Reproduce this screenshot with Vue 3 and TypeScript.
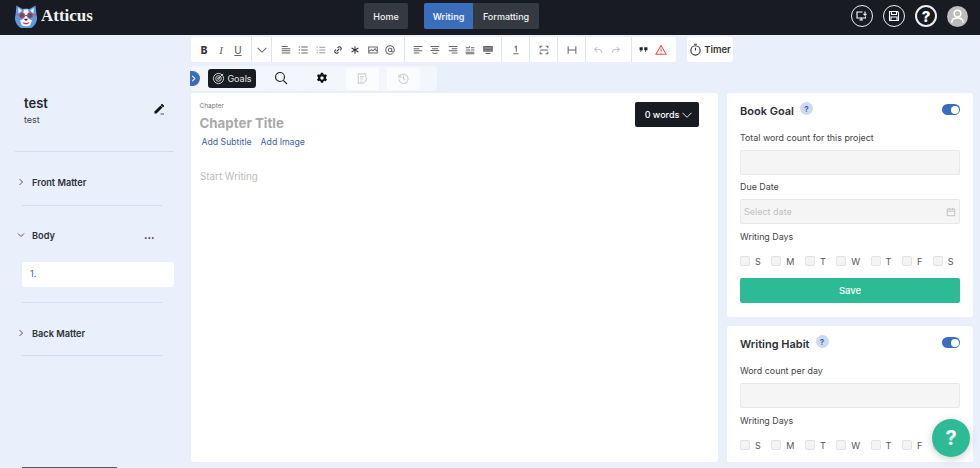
<script setup lang="ts">
interface Tool { key: string; d?: string; text?: string; cls?: string }
const lines = (rows: [number, number][]): string =>
  rows.map(([y, w]) => `M2 ${y}h${w}`).join('');
const centerLines = (rows: [number, number][]): string =>
  rows.map(([y, w]) => `M${7 - w / 2} ${y}h${w}`).join('');
const rightLines = (rows: [number, number][]): string =>
  rows.map(([y, w]) => `M${12 - w} ${y}h${w}`).join('');

const groups: { width: number; pad: number; btn: number; tools: Tool[] }[] = [
  { width: 61, pad: 4.5, btn: 17, tools: [
    { key: 'b', text: 'B', cls: 'bold' }, { key: 'i', text: 'I', cls: 'ital' }, { key: 'u', text: 'U', cls: 'under' },
  ] },
  { width: 20, pad: 1, btn: 18, tools: [{ key: 'chev', d: 'M2 4.500l5 5 5-5' }] },
  { width: 133, pad: 5.5, btn: 17.3, tools: [
    { key: 'para', d: lines([[3, 7], [5.5, 10], [8, 10], [10.5, 10]]) },
    { key: 'ul', d: 'M2 3.500h1.500M5 3.500h7.500M2 7h1.500M5 7h7.500M2 10.500h1.500M5 10.500h7.500' },
    { key: 'ol', d: 'M2.500 3v1.500M2.500 6.300v1.500M2.500 9.500v1.500M5 3.800h7M5 7h7M5 10.200h7', cls: 'soft' },
    { key: 'link', d: 'M5.500 8.500l3-3M6.500 4.500l1-1a2.200 2.200 0 0 1 3 3l-1 1M7.500 9.500l-1 1a2.200 2.200 0 0 1-3-3l1-1', cls: 'dark' },
    { key: 'star', d: 'M7 2.500v9M3 4.700l8 4.600M11 4.700l-8 4.600', cls: 'dark' },
    { key: 'img', d: 'M2 3.500h10v7H2zM2 9l3-2.500 2 1.500 2-2 3 2.500M9 5.200h1' },
    { key: 'at', d: 'M9 7a2 2 0 1 1-4 0 2 2 0 0 1 4 0zM9 5v3a1.500 1.500 0 0 0 3 0V7a5 5 0 1 0-2 4' },
  ] },
  { width: 97, pad: 4.3, btn: 17.4, tools: [
    { key: 'al', d: lines([[3, 10], [5.5, 6.5], [8, 10], [10.5, 6.5]]) },
    { key: 'ac', d: 'M2 3h10M3.500 5.500h7M2 7.500h10M4 10q3 2 6 0' },
    { key: 'ar', d: rightLines([[3, 10], [5.5, 6.5], [8, 10], [10.5, 6.5]]) },
    { key: 'aj', d: 'M2 11.500h10M2 9.500h10M2 7h5M8 7h4M2 4.500h4M8 4.500h4M6.500 2.500v2' },
    { key: 'bk', d: 'M2 2.800h10v5.600H2zM2 3.500h10M2 5h10M2 6.500h10M2 8h10M4 11h6' },
  ] },
  { width: 28, pad: 4.5, btn: 19, tools: [{ key: 'one', d: 'M5.500 4l1.800-1.400v6.400M4 11.500h6' }] },
  { width: 28, pad: 4.5, btn: 19, tools: [{ key: 'fit', d: 'M2.500 5V2.500H5M9 2.500h2.500V5M2.500 9v2.500H5M9 11.500h2.500V9M2.500 7h9' }] },
  { width: 28, pad: 4.5, btn: 19, tools: [{ key: 'wide', d: 'M2.500 2.500v9M11.500 2.500v9M2.500 7h9' }] },
  { width: 46, pad: 3, btn: 18, tools: [
    { key: 'undo', d: 'M6 3.500L3 6.500l3 3M3 6.500h5a3.500 3.500 0 0 1 3.500 4', cls: 'faint' },
    { key: 'redo', d: 'M8 3.500l3 3-3 3M11 6.500H6a3.500 3.500 0 0 0-3.500 4', cls: 'faint' },
  ] },
];
const days: string[] = ['S', 'M', 'T', 'W', 'T', 'F', 'S'];
</script>

<template>
  <div class="app">
    <header class="top">
      <div class="brand">
        <svg class="logo" viewBox="0 0 24 24" width="24" height="24">
          <path d="M2.500 1.500L8.500 5q3.500-1 7 0l6-3.500 1 9.500a11 11 0 1 1-21 0z" fill="#5f9ae0" />
          <path d="M4.200 3.800L7.800 6.500 4.500 9.500zM19.800 3.800L16.200 6.500l3.300 3z" fill="#e9eef6" />
          <path d="M10 5.500h4l2 9h-8z" fill="#f6f6f6" />
          <path d="M6 16.500q6-4 12 0l-2 5q-4 1.500-8 0z" fill="#f6f6f6" />
          <circle cx="8" cy="11.500" r="2.700" fill="#3c5c8e" stroke="#e2453e" stroke-width="1" />
          <circle cx="16" cy="11.500" r="2.700" fill="#3c5c8e" stroke="#e2453e" stroke-width="1" />
          <path d="M2.500 10.500l3 .5M10.500 11.500h3M18.500 11l3-.5" stroke="#e2453e" stroke-width="1" />
          <path d="M10 15h4l-2 2z" fill="#1d2026" />
          <path d="M8.500 18q3.500 2 7 0l-1 1.800q-2.500 1-5 0z" fill="#c9414d" />
        </svg>
        <span class="word">Atticus</span>
      </div>
      <nav class="nav">
        <button class="nav-btn home">Home</button>
        <div class="seg">
          <button class="nav-btn active">Writing</button>
          <button class="nav-btn fmt">Formatting</button>
        </div>
      </nav>
      <div class="actions">
        <span class="ring">
          <svg viewBox="0 0 14 14" width="14" height="14" fill="none" stroke="#fff" stroke-width="1.100">
            <path d="M7.500 3H2v6h8.500V7.500M4.500 11h3.500M6.200 9v2" /><path d="M10 2.500v3.500M8.500 4.800L10 6.300l1.500-1.500" />
          </svg>
        </span>
        <span class="ring">
          <svg viewBox="0 0 14 14" width="14" height="14" fill="none" stroke="#fff" stroke-width="1.100">
            <path d="M2.500 2.500h8l1 1v8h-9zM4.500 2.500v3h5v-3M4 11.500V8h6v3.500" />
          </svg>
        </span>
        <span class="ring strong">?</span>
        <span class="avatar">
          <svg viewBox="0 0 22 22" width="22" height="22" fill="none" stroke="#fff" stroke-width="1.500">
            <circle cx="11" cy="8.500" r="3.500" /><path d="M5 18q0-5 6-5t6 5" />
          </svg>
        </span>
      </div>
    </header>

    <div class="body">
      <aside class="side">
        <div class="book">
          <div>
            <div class="book-title">test</div>
            <div class="book-sub">test</div>
          </div>
          <svg viewBox="0 0 12 12" width="12" height="12">
            <path d="M1.500 8.500L7.500 2.500l2 2-6 6H1.500z" fill="#111" /><path d="M8 2l1-1 2 2-1 1zM7.500 11h3.500" fill="#111" stroke="#111" stroke-width=".7" />
          </svg>
        </div>
        <div class="rule wide" />
        <div class="sec front">
          <svg class="car" viewBox="0 0 8 8" width="8" height="8"><path d="M2.500 1l3 3-3 3" /></svg>
          <span>Front Matter</span>
        </div>
        <div class="rule" />
        <div class="sec body-sec">
          <svg class="car" viewBox="0 0 8 8" width="8" height="8"><path d="M1 2.500l3 3 3-3" /></svg>
          <span>Body</span>
          <b class="dots">...</b>
        </div>
        <div class="chapter">1.</div>
        <div class="rule" />
        <div class="sec back">
          <svg class="car" viewBox="0 0 8 8" width="8" height="8"><path d="M2.500 1l3 3-3 3" /></svg>
          <span>Back Matter</span>
        </div>
        <div class="rule" />
        <div class="foot" />
      </aside>

      <main class="center">
        <div class="toolrow">
          <div class="toolbar">
            <div
              v-for="g in groups"
              :key="g.width + g.tools[0].key"
              class="group"
              :style="{ width: g.width + 'px', paddingLeft: g.pad + 'px' }"
            >
              <span
                v-for="t in g.tools"
                :key="t.key"
                class="tool"
                :class="t.cls"
                :style="{ width: g.btn + 'px' }"
              >
                <template v-if="t.text">{{ t.text }}</template>
                <svg v-else viewBox="0 0 14 14" width="12" height="12" fill="none" stroke="currentColor" stroke-width="1.200">
                  <path :d="t.d" />
                </svg>
              </span>
            </div>
            <div class="group last">
              <span class="tool"><svg viewBox="0 0 14 14" width="11" height="11"><path d="M2 4h4v4H4.500L4 10H2.800l.7-2H2zM8 4h4v4h-1.500L10 10H8.800l.7-2H8z" fill="#222" /></svg></span>
              <span class="tool"><svg viewBox="0 0 14 14" width="12" height="12" fill="none" stroke="#e8504a" stroke-width="1.200"><path d="M7 1.800L13 12H1zM7 5.500v3.500M7 10v1" /></svg></span>
            </div>
          </div>
          <div class="timer">
            <svg viewBox="0 0 14 14" width="13" height="13" fill="none" stroke="#333" stroke-width="1.200">
              <circle cx="7" cy="8" r="5" /><path d="M5.500 1.300h3M7 5v3" />
            </svg>
            <span>Timer</span>
          </div>
        </div>

        <div class="subrow">
          <span class="collapse">
            <svg viewBox="0 0 8 8" width="7" height="7" fill="none" stroke="#fff" stroke-width="1.200"><path d="M2.500 1l3 3-3 3" /></svg>
          </span>
          <button class="goals">
            <svg viewBox="0 0 14 14" width="13" height="13" fill="none" stroke="#ddd" stroke-width="1">
              <circle cx="7" cy="7" r="5.500" /><circle cx="7" cy="7" r="3" /><circle cx="7" cy="7" r="1" /><path d="M7 7l5-5" />
            </svg>
            Goals
          </button>
          <span class="sub plain search">
            <svg viewBox="0 0 14 14" width="14" height="14" fill="none" stroke="#222" stroke-width="1.100"><circle cx="6" cy="6" r="4.500" /><path d="M9.300 9.300L13 13" /></svg>
          </span>
          <span class="sub plain">
            <svg viewBox="0 0 14 14" width="12" height="12">
              <path fill="#111" fill-rule="evenodd" d="M5.700 1h2.600l.4 1.700 1.200.6 1.600-.8 1.400 2.200-1.300 1.200v1.600l1.300 1.200-1.400 2.200-1.600-.8-1.200.7-.4 1.700H5.700l-.4-1.700-1.200-.7-1.600.8L1.100 8.700l1.300-1.200V5.900L1.100 4.700l1.400-2.200 1.600.8 1.200-.6zM7 5a2 2 0 1 0 0 4 2 2 0 0 0 0-4z" />
            </svg>
          </span>
          <span class="sub">
            <svg viewBox="0 0 14 14" width="13" height="13" fill="none" stroke="#d0d0d0" stroke-width="1.200"><path d="M10.500 6V2h-8v10h6M4.500 5h4M4.500 7.500h3M4.500 10h2M12 6.500l-3 5" /></svg>
          </span>
          <span class="sub">
            <svg viewBox="0 0 14 14" width="13" height="13" fill="none" stroke="#d0d0d0" stroke-width="1.200"><path d="M2.500 5a5 5 0 1 1-.5 3M2 2.500V5.500h3M7 4v3.500l2 1" /></svg>
          </span>
        </div>

        <section class="editor">
          <div class="ed-head">
            <div>
              <div class="ch-label">Chapter</div>
              <div class="ch-title">Chapter Title</div>
              <div class="ch-links"><a>Add Subtitle</a><a>Add Image</a></div>
            </div>
            <button class="words">
              0 words
              <svg viewBox="0 0 10 10" width="10" height="10" fill="none" stroke="#fff" stroke-width=".9"><path d="M.5 2.800L5 7.300l4.500-4.500" /></svg>
            </button>
          </div>
          <div class="start">Start Writing</div>
        </section>
      </main>

      <aside class="right">
        <section class="card goal">
          <div class="card-head">
            <h3>Book Goal</h3><span class="hint">?</span>
            <span class="toggle" />
          </div>
          <label class="lab first">Total word count for this project</label>
          <div class="field" />
          <label class="lab">Due Date</label>
          <div class="field date">
            <span>Select date</span>
            <svg viewBox="0 0 12 12" width="10" height="10" fill="none" stroke="#bbb" stroke-width="1"><path d="M1.500 2.500h9v8h-9zM1.500 5h9M4 1v2.500M8 1v2.500" /></svg>
          </div>
          <label class="lab wd">Writing Days</label>
          <div class="days">
            <span v-for="(d, i) in days" :key="i" class="day"><i />{{ d }}</span>
          </div>
          <button class="save">Save</button>
        </section>
        <section class="card habit">
          <div class="card-head">
            <h3>Writing Habit</h3><span class="hint">?</span>
            <span class="toggle" />
          </div>
          <label class="lab first">Word count per day</label>
          <div class="field" />
          <label class="lab wd">Writing Days</label>
          <div class="days">
            <span v-for="(d, i) in days" :key="i" class="day"><i />{{ d }}</span>
          </div>
        </section>
      </aside>
    </div>
    <button class="fab">?</button>
  </div>
</template>

<style>
html, body { margin: 0; background: #e9f0fb; overflow: hidden; }
</style>

<style scoped>
* { box-sizing: border-box; }
.app { position: relative; width: 980px; height: 468px; overflow: hidden; background: #e9f0fb; font-family: Inter, "Liberation Sans", sans-serif; color: #333; }
button { font-family: inherit; border: 0; padding: 0; }
.top { height: 35px; background: #181c22; display: flex; align-items: flex-start; position: relative; }
.brand { width: 364px; height: 32px; display: flex; align-items: center; padding-left: 14px; gap: 3px; }
.logo { flex: none; }
.word { font-family: "Liberation Serif", serif; font-weight: 700; font-size: 17px; color: #f3f3f3; }
.nav { display: flex; gap: 16px; padding-top: 3px; }
.seg { display: flex; }
.nav-btn { height: 26px; color: #f2f2f2; font-size: 9px; font-weight: 500; background: #343a40; }
.home { width: 44px; border-radius: 2px; }
.active { width: 49px; background: #3a6ebd; border-radius: 2px 0 0 2px; font-weight: 600; }
.fmt { width: 66px; border-radius: 0 2px 2px 0; }
.actions { margin-left: auto; display: flex; align-items: center; gap: 10px; padding: 5px 12px 0 0; }
.ring { width: 22px; height: 22px; border: 1.3px solid #eee; border-radius: 50%; display: flex; align-items: center; justify-content: center; color: #fff; }
.strong { border-width: 2px; font-weight: 800; font-size: 15px; }
.avatar { width: 21px; height: 21px; border-radius: 50%; background: #bdbdbd; overflow: hidden; display: flex; align-items: center; justify-content: center; }

.body { display: flex; height: 433px; }
.side { width: 190px; flex: none; padding: 60px 0 0 0; position: relative; }
.book { display: flex; justify-content: space-between; align-items: flex-start; padding: 0 25px 0 24px; height: 56px; }
.book svg { margin-top: 8px; }
.book-title { font-size: 13px; font-weight: 600; color: #22262c; line-height: 16px; }
.book-sub { font-size: 9px; color: #444; line-height: 12px; margin-top: 3px; }
.rule { height: 1px; background: #cfdff2; margin: 0 28px 0 22px; }
.rule.wide { margin: 0 16px 0 15px; }
.sec { display: flex; align-items: center; font-size: 9.2px; font-weight: 600; color: #2b2f36; padding-left: 17px; height: 12px; }
.car { fill: none; stroke: #444; stroke-width: .9; margin-right: 7px; }
.front { margin: 24px 0 17px; }
.body-sec { margin: 23px 0 21px; position: relative; }
.dots { position: absolute; left: 144px; top: 1px; font-size: 10px; font-weight: 800; line-height: 10px; }
.back { margin: 24px 0 16px; }
.chapter { height: 25px; width: 152px; margin: 0 0 15px 22px; background: #fff; border-radius: 3px; font-size: 9px; line-height: 23px; padding-left: 8px; color: #3b62a8; }
.foot { position: absolute; left: 22px; top: 432px; width: 95px; height: 2px; background: #555b66; }

.center { width: 528px; flex: none; margin-left: 1px; padding-top: 2px; display: flex; flex-direction: column; }
.toolrow { display: flex; height: 25px; gap: 11px; }
.toolbar { display: flex; width: 485px; flex: none; background: #fff; border-radius: 3px; }
.group { display: flex; align-items: center; border-right: 1px solid #dbe6f5; flex: none; height: 100%; }
.last { border-right: 0; padding-left: 3px; }
.last .tool { width: 17.5px; }
.tool { display: flex; align-items: center; justify-content: center; color: #666; font-size: 10px; flex: none; }
.bold { font-weight: 800; color: #333; }
.ital { font-style: italic; font-family: "Liberation Serif", serif; font-size: 11px; }
.under { text-decoration: underline; font-weight: 500; }
.faint { color: #c4c4c4; }
.soft { color: #999; }
.dark { color: #333; }
.timer { width: 46px; flex: none; background: #fff; border-radius: 3px; display: flex; align-items: center; justify-content: center; gap: 2px; font-size: 9.5px; font-weight: 600; color: #333; }
.subrow { display: flex; align-items: center; width: 246px; height: 25px; margin-top: 4px; background: #f3f7fd; border-radius: 3px; position: relative; }
.collapse { width: 10px; height: 15px; background: #3a6ebd; border-radius: 0 8px 8px 0; display: flex; align-items: center; margin-left: -1px; flex: none; }
.goals { margin-left: 8px; width: 48px; height: 19px; background: #181c22; color: #e6e6e6; border-radius: 3px; font-size: 9px; display: flex; align-items: center; justify-content: center; gap: 2px; flex: none; }
.sub { display: flex; align-items: center; justify-content: center; height: 22px; width: 33px; flex: none; margin-left: 8px; background: #fbfcfe; border-radius: 3px; }
.plain { background: transparent; border-bottom: 1px solid #eef3fb; }
.editor { margin-top: 2px; width: 527px; height: 369px; background: #fff; border-radius: 3px; padding: 9px 19px 0 8.500px; }
.ed-head { display: flex; justify-content: space-between; align-items: flex-start; }
.ch-label { font-size: 6.5px; color: #777; line-height: 8px; }
.ch-title { font-size: 13.300px; font-weight: 700; color: #a9a9a9; line-height: 18px; margin-top: 4px; }
.ch-links { display: flex; gap: 9px; margin: 4px 0 0 2px; font-size: 8.700px; color: #3b62a8; line-height: 12px; }
.words { width: 64px; height: 25px; background: #181c22; color: #fff; font-size: 9px; font-weight: 500; border-radius: 2px; display: flex; align-items: center; justify-content: center; gap: 3px; padding-left: 3px; }
.start { margin: 22px 0 0 0.500px; font-size: 9.800px; color: #bbb; line-height: 14px; }

.right { margin-left: 8px; width: 246px; flex: none; padding-top: 58px; display: flex; flex-direction: column; gap: 9px; height: 427px; overflow: hidden; }
.card { background: #fff; border-radius: 3px; padding: 0 13px; flex: none; }
.goal { height: 224px; }
.habit { height: 137px; }
.card-head { height: 34px; display: flex; align-items: center; position: relative; padding-top: 1px; }
h3 { margin: 0; font-size: 11px; font-weight: 600; color: #2b2f36; }
.hint { width: 13px; height: 13px; border-radius: 50%; background: #cbdaf0; color: #3b62a8; font-size: 8px; font-weight: 700; display: flex; align-items: center; justify-content: center; margin: -4px 0 0 6px; }
.toggle { position: absolute; right: 0; top: 11px; width: 18px; height: 11px; border-radius: 6px; background: #3a6ebd; }
.toggle::after { content: ""; position: absolute; right: 1px; top: 1.500px; width: 8px; height: 8px; border-radius: 50%; background: #fff; }
.lab { display: block; font-size: 8.900px; color: #444; line-height: 12px; height: 12px; margin-top: 6px; }
.lab.first { margin-top: 5px; }
.lab.wd { margin-top: 7px; }
.field { height: 25px; margin-top: 6px; background: #f5f5f5; border: 1px solid #e8e8e8; border-radius: 2px; }
.date { display: flex; align-items: center; justify-content: space-between; padding: 0 3px; font-size: 9px; color: #c0c0c0; }
.days { display: flex; gap: 10.500px; margin-top: 12px; height: 12px; }
.day { display: flex; align-items: center; font-size: 9px; color: #555; flex: none; }
.day i { width: 10px; height: 10px; background: #f4f4f4; border: 1px solid #e3e3e3; border-radius: 2px; margin-right: 5px; flex: none; }
.save { display: block; width: 100%; height: 25px; margin-top: 11px; background: #2dbb95; color: #fff; font-size: 9.500px; font-weight: 500; border-radius: 2px; }
.fab { position: absolute; left: 932px; top: 419px; width: 38px; height: 38px; border-radius: 50%; background: #2dbb95; color: #fff; font-size: 20px; font-weight: 700; box-shadow: 0 2px 8px rgba(0,0,0,.2); }
</style>
